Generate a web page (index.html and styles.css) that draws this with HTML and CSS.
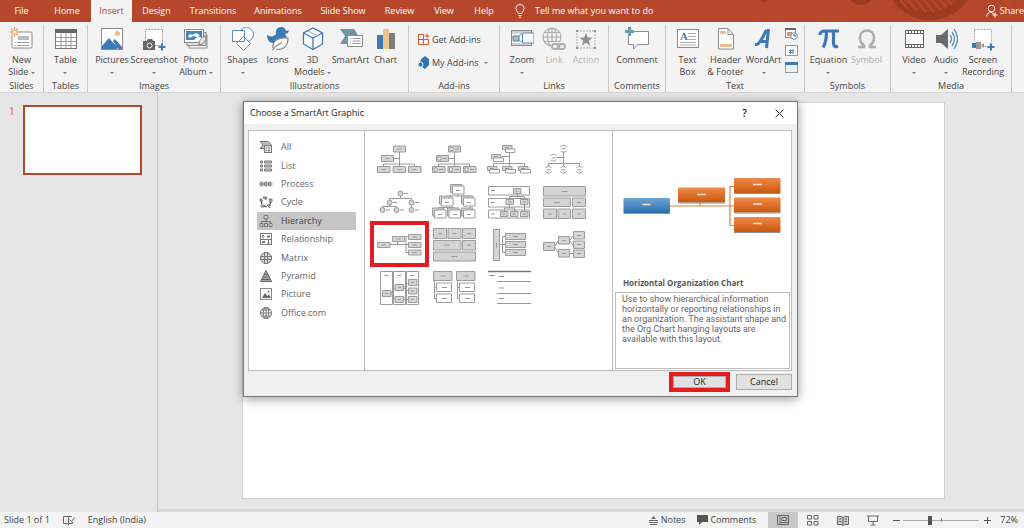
FILE: index.html
```html
<!DOCTYPE html>
<html lang="en">
<head>
  <meta charset="UTF-8">
  <title>Choose a SmartArt Graphic</title>
  <link rel="stylesheet" href="styles.css">
</head>
<body>

  <!-- Tabs -->
  <header class="tabs">
    <svg class="tabs-art" width="280" height="22" viewBox="0 0 280 22">
      <g fill="#9c3a22">
        <ellipse cx="20" cy="-3" rx="7" ry="5"/>
        <circle cx="117" cy="-8" r="13"/>
        <circle cx="186" cy="-26" r="46"/>
      </g>
      <circle cx="186" cy="-26" r="38" fill="#a43d24"/>
      <path d="M156 0l8 9M164 0l9 11M172 0l10 12M180 0l10 12M188 0l9 10M196 0l7 8M204 0l4 5" stroke="#b7472a" stroke-width="2"/>
      <path d="M244 0l12 14M256 0l10 11M268 0l7 8" stroke="#a94027" stroke-width="1"/>
    </svg>
    <nav class="tab-list">
      <button class="tab">File</button>
      <button class="tab">Home</button>
      <button class="tab active">Insert</button>
      <button class="tab">Design</button>
      <button class="tab">Transitions</button>
      <button class="tab">Animations</button>
      <button class="tab">Slide Show</button>
      <button class="tab">Review</button>
      <button class="tab">View</button>
      <button class="tab">Help</button>
    </nav>
    <button class="tell-me">
      <svg width="10" height="14" viewBox="0 0 10 14" fill="none" stroke="#fff"><path d="M3.2 9.5C3 7.5 1 7 1 4.6a4 4 0 0 1 8 0C9 7 7 7.500 6.800 9.500ZM3.500 11.500h3M4 13.200h2"/></svg>
      Tell me what you want to do
    </button>
    <button class="share">
      <svg width="12" height="14" viewBox="0 0 12 14" fill="none" stroke="#fff"><circle cx="5.500" cy="4.500" r="3.300"/><path d="M.6 12.500C1 9.500 3 8 5 8l3 2M9 8.500v5M6.500 11h5"/></svg>
      Share
    </button>
  </header>

  <!-- Ribbon -->
  <section class="ribbon">
    <div class="group">
      <div class="tools">
        <button class="tool">
          <svg width="24" height="24" viewBox="0 0 24 24" fill="none"><rect x="3" y="5" width="20" height="16" rx="1" fill="#fff" stroke="#8c8c8c"/><path d="M9 9h11v4H9z" fill="#bbb"/><path d="M8 15.500h12M8 18.500h12M5.500 15.500h1M5.500 18.500h1" stroke="#999"/><circle cx="5.500" cy="5" r="4.500" fill="#f3f3f3"/><path d="M5.500 0v10M.5 5h10M2 1.500l7 7M9 1.500l-7 7" stroke="#e9a86a" stroke-width="1.300"/><circle cx="5.500" cy="5" r="1.600" fill="#fff"/></svg>
          <span>New<br>Slide <i class="caret"></i></span>
        </button>
      </div>
      <div class="group-name">Slides</div>
    </div>

    <div class="group">
      <div class="tools">
        <button class="tool">
          <svg width="24" height="24" viewBox="0 0 24 24"><rect x="1.500" y="2.500" width="21" height="19" fill="#fff" stroke="#777"/><path d="M1 2h22v4H1z" fill="#666"/><path d="M2 10.500h20M2 14.500h20M2 18.500h20M7 6v15M12 6v15M17 6v15" stroke="#999"/></svg>
          <span>Table<br><i class="caret"></i></span>
        </button>
      </div>
      <div class="group-name">Tables</div>
    </div>

    <div class="group">
      <div class="tools">
        <button class="tool large">
          <svg width="24" height="24" viewBox="0 0 24 24"><rect x="1.500" y="1.500" width="21" height="21" fill="#fff" stroke="#8c8c8c"/><circle cx="17.500" cy="6.500" r="2.500" fill="#f0bd85"/><path d="M2 19l7-8 8 9v2H2zM13 14l2-2 7 8v2h-4z" fill="#3d7ab5"/></svg>
          <span>Pictures<br><i class="caret"></i></span>
        </button>
        <button class="tool large">
          <svg width="24" height="24" viewBox="0 0 24 24" fill="none"><rect x="3.500" y="2.500" width="17" height="16" fill="#fff" stroke="#999" stroke-dasharray="2 1"/><path d="M2 14h2.500l1.500-2h4l1.500 2H13v9H1v-9z" fill="#666"/><circle cx="7.500" cy="18.500" r="2.500" fill="#666" stroke="#eee"/><path d="M20 16.500v7M16.500 20h7" stroke="#3d7ab5" stroke-width="2"/></svg>
          <span>Screenshot<br><i class="caret"></i></span>
        </button>
        <button class="tool large">
          <svg width="24" height="24" viewBox="0 0 24 24"><rect x="5" y="8" width="18" height="13" fill="#fff" stroke="#8c8c8c"/><rect x="3" y="5.500" width="19" height="13" fill="#ddd" stroke="#8c8c8c"/><rect x=".5" y="2.500" width="19" height="13" fill="#fff" stroke="#8c8c8c"/><path d="M2 4h16v7l-4-2-4 4H2z" fill="#4a86ba"/><path d="M4 9c2-4 4 0 6-2s4 0 6 1l-3 2-4-1-3 2z" fill="#fff"/><path d="M15 17c0-3 2-6 6-8l1 3c-1 3-3 5-7 6z" fill="#e8e8e8" stroke="#777"/></svg>
          <span>Photo<br>Album <i class="caret"></i></span>
        </button>
      </div>
      <div class="group-name">Images</div>
    </div>

    <div class="group">
      <div class="tools lead">
        <button class="tool medium">
          <svg width="24" height="24" viewBox="0 0 24 24" fill="#fff" stroke="#5b92be"><circle cx="15.500" cy="7.500" r="7"/><path d="M1.500 3.500h12v11h-12zM12.500 9.500l7 7-7 7-7-7z"/></svg>
          <span>Shapes<br><i class="caret"></i></span>
        </button>
        <button class="tool small">
          <svg width="24" height="24" viewBox="0 0 24 24"><path d="M1 8c3 2 7 2 9-1-1-3 1-7 5-7 3 0 5 2 5 4l3-1-1 3-3 1c3 3 2 8-2 9H7C3 16 1 12 1 8z" fill="#3d7ab5"/><path d="M7 21c-1-7 5-11 15-10 0 7-4 13-12 11M6 23.500c3-4 6-6 10-8" fill="#fff" stroke="#858585" stroke-width="1.200"/></svg>
          <span>Icons</span>
        </button>
        <button class="tool medium">
          <svg width="24" height="24" viewBox="0 0 24 24" fill="#fff" stroke="#3d7ab5" stroke-width="1.300"><path d="M12 1l9.500 5v11L12 22.500 2.500 17V6z"/><path d="M2.500 6l9.500 5 9.500-5M12 11v11.500" fill="none"/><path d="M7 4l9.500 5" stroke="#9bbdd8"/></svg>
          <span>3D<br>Models <i class="caret"></i></span>
        </button>
        <button class="tool medium">
          <svg width="24" height="24" viewBox="0 0 24 24"><path d="M1 2h14l4 6-5 9H1l5-8z" fill="#7096a6"/><rect x="8.500" y="8.500" width="15" height="11" fill="#fff" stroke="#8c8c8c"/><path d="M11 11.500h1M11 14h1M11 16.500h1M13.500 11.500h8M13.500 14h8M13.500 16.500h8" stroke="#999"/></svg>
          <span>SmartArt</span>
        </button>
        <button class="tool small">
          <svg width="24" height="24" viewBox="0 0 24 24"><path d="M3 8h6v14H3z" fill="#3d7ab5"/><path d="M9 2h6v20H9z" fill="#edc38f"/><path d="M15 6h6v16h-6z" fill="#7d7d7d"/></svg>
          <span>Chart</span>
        </button>
      </div>
      <div class="group-name">Illustrations</div>
    </div>

    <div class="group">
      <div class="tools addins">
        <button class="row-tool">
          <svg width="13" height="13" viewBox="0 0 13 13" fill="none" stroke="#cf5b38"><path d="M6.500 1.500h-5v10h10v-5M1.500 6.500h10M6.500 1.500v10M10 .5v5M7.500 3h5"/></svg>
          Get Add-ins
        </button>
        <button class="row-tool">
          <svg width="13" height="13" viewBox="0 0 13 13"><path d="M4 3l4-3 4 3v6l-4 4-3-2 1-3-3-2z" fill="#2e75b6"/><circle cx="3.500" cy="8.500" r="2.500" fill="#2e75b6" stroke="#f3f3f3"/></svg>
          My Add-ins <i class="caret spaced"></i>
        </button>
      </div>
      <div class="group-name">Add-ins</div>
    </div>

    <div class="group">
      <div class="tools">
        <button class="tool small">
          <svg width="24" height="24" viewBox="0 0 24 24"><rect x="1.500" y="3.500" width="20" height="15" fill="#fff" stroke="#8c8c8c"/><path d="M2 4h19v3H2zM2 16h19v2H2z" fill="#d4d4d4"/><path d="M3 9h6v5H3z" fill="#9cc3d6" stroke="#777"/><path d="M9 9l4-3h11v10H13l-4-3z" fill="#f5faff" stroke="#5b92be"/><path d="M12.500 6.500v9" stroke="#5b92be"/></svg>
          <span>Zoom<br><i class="caret"></i></span>
        </button>
        <button class="tool small" disabled>
          <svg width="24" height="24" viewBox="0 0 24 24" fill="none" stroke="#adadad" stroke-width="1.200"><circle cx="10" cy="10" r="9"/><ellipse cx="10" cy="10" rx="4.500" ry="9"/><path d="M10 1v18M1 10h18M2.500 5.500h15M2.500 14.500h15"/><rect x="9" y="15" width="14" height="8" fill="#f3f3f3" stroke="none"/><g stroke-width="1.800"><rect x="10" y="17" width="7.500" height="5" rx="2.500"/><rect x="15.500" y="17" width="7.500" height="5" rx="2.500"/></g></svg>
          <span>Link</span>
        </button>
        <button class="tool small" disabled>
          <svg width="24" height="24" viewBox="0 0 24 24" fill="#8f8f8f"><rect x="3" y="4" width="18" height="17" fill="none" stroke="#aaa" stroke-dasharray="2 1"/><path d="M12 6l1.800 4.500 4.700.2-3.700 3 1.300 4.800L12 15.800l-4.100 2.700 1.300-4.800-3.700-3 4.700-.2z"/><path d="M2 3h2v2H2zM20 3h2v2h-2zM2 20h2v2H2zM20 20h2v2h-2z"/></svg>
          <span>Action</span>
        </button>
      </div>
      <div class="group-name">Links</div>
    </div>

    <div class="group">
      <div class="tools">
        <button class="tool">
          <svg width="24" height="24" viewBox="0 0 24 24"><path d="M3.500 4.500h20v13h-11l-4 4.500v-4.500h-5z" fill="#fff" stroke="#8c8c8c"/><path d="M4.500 0v9M0 4.500h9" stroke="#f3f3f3" stroke-width="5"/><path d="M4.500 0v9M0 4.500h9" stroke="#6f9bb0" stroke-width="3"/></svg>
          <span>Comment</span>
        </button>
      </div>
      <div class="group-name">Comments</div>
    </div>

    <div class="group">
      <div class="tools lead">
        <button class="tool medium">
          <svg width="24" height="24" viewBox="0 0 24 24"><rect x="1.500" y="2.500" width="21" height="18" fill="#fff" stroke="#8c8c8c"/><path d="M12 6.500h8M12 9.500h8M12 12.500h8M4 15.500h16M4 18h16" stroke="#aaa"/><text x="4" y="12.500" class="glyph-a">A</text></svg>
          <span>Text<br>Box</span>
        </button>
        <button class="tool medium">
          <svg width="24" height="24" viewBox="0 0 24 24"><path d="M4.500 1.500H14l5.500 6v14.500h-15z" fill="#fff" stroke="#8c8c8c"/><path d="M14 1.500v6h5.500" fill="none" stroke="#8c8c8c"/><path d="M6 4h6v3H6zM6 17h12v3H6z" fill="#efc08d"/></svg>
          <span>Header<br>&amp; Footer</span>
        </button>
        <button class="tool medium">
          <svg width="24" height="24" viewBox="0 0 24 24"><path d="M3 17.500c3 .5 5-2 7-6l4.500-8.500M16.500 2l-2 19M8 14.500h7" fill="none" stroke="#3d7ab5" stroke-width="3"/></svg>
          <span>WordArt<br><i class="caret"></i></span>
        </button>
        <div class="stack">
          <button aria-label="Date and time"><svg width="13" height="13" viewBox="0 0 13 13"><rect x=".5" y="1.500" width="10" height="9" fill="#fff" stroke="#888"/><path d="M0 1h11v2H0z" fill="#666"/><path d="M2 5h5v4H2z" fill="#e2926c"/><circle cx="9" cy="9" r="3.300" fill="#fff" stroke="#5b92be"/><path d="M9 7v2h2" fill="none" stroke="#555"/></svg></button>
          <button aria-label="Slide number"><svg width="13" height="13" viewBox="0 0 13 13"><rect x=".5" y="1.500" width="12" height="10" fill="#fff" stroke="#999"/><path d="M5.500 5v5M8 5v5M4 6.500h5M4 8.500h5" stroke="#5b92be"/></svg></button>
          <button aria-label="Object"><svg width="13" height="13" viewBox="0 0 13 13"><rect x=".5" y="1.500" width="12" height="10" fill="#eaf2f8" stroke="#999"/><path d="M0 1h13v3H0z" fill="#3d7ab5"/></svg></button>
        </div>
      </div>
      <div class="group-name">Text</div>
    </div>

    <div class="group">
      <div class="tools">
        <button class="tool medium">
          <svg width="24" height="24" viewBox="0 0 24 24"><path d="M3 8C3 4.500 5 4 8 4h14M9.500 4c0 8-1 13-3.500 16.500M16.500 4v12c0 3.500 2 4.500 4.500 3" fill="none" stroke="#3d7ab5" stroke-width="3.200"/></svg>
          <span>Equation<br><i class="caret"></i></span>
        </button>
        <button class="tool medium" disabled>
          <svg width="24" height="24" viewBox="0 0 24 24"><path d="M3 20h6v-1.500C6.500 16.500 5 14 5 11c0-5 3-7.500 7-7.500s7 2.500 7 7.500c0 3-1.500 5.500-4 7.500V20h6" fill="none" stroke="#adadad" stroke-width="2.600"/></svg>
          <span>Symbol</span>
        </button>
      </div>
      <div class="group-name">Symbols</div>
    </div>

    <div class="group">
      <div class="tools">
        <button class="tool small">
          <svg width="24" height="24" viewBox="0 0 24 24"><path d="M3 3h19v18H3z" fill="#666"/><path d="M4 7h17v10H4z" fill="#fff"/><path d="M4 5h17M4 19h17" stroke="#fff" stroke-width="2" stroke-dasharray="2 1"/></svg>
          <span>Video<br><i class="caret"></i></span>
        </button>
        <button class="tool small">
          <svg width="24" height="24" viewBox="0 0 24 24"><path d="M2 8h5l7-6v20l-7-6H2z" fill="#6a6a6a"/><path d="M16 8q3 4 0 8M18 5q5 7 0 14M20 2q7 10 0 20" fill="none" stroke="#5b92be" stroke-width="1.300"/></svg>
          <span>Audio<br><i class="caret"></i></span>
        </button>
        <button class="tool large">
          <svg width="24" height="24" viewBox="0 0 24 24"><rect x="3.500" y="2.500" width="17" height="17" fill="#fff" stroke="#aaa" stroke-dasharray="2 1"/><path d="M1 14h9v8H1z" fill="#f3f3f3"/><path d="M1 16h8v5H1z" fill="#3d7ab5"/><path d="M5 15h5v7H5zM10 18l3-2v5z" fill="#999"/><path d="M20 16v8M16 20h8" stroke="#f3f3f3" stroke-width="4"/><path d="M20 16.500v7M16.500 20h7" stroke="#3d7ab5" stroke-width="2"/></svg>
          <span>Screen<br>Recording</span>
        </button>
      </div>
      <div class="group-name">Media</div>
    </div>
  </section>

  <!-- Workspace -->
  <main class="workspace">
    <aside class="slides-pane">
      <span class="slide-number">1</span>
      <div class="slide-thumb"></div>
    </aside>
    <div class="editor">
      <div class="slide"></div>
    </div>
  </main>

  <!-- Dialog -->
  <div class="dialog" role="dialog" aria-labelledby="dialog-title">
    <div class="dialog-bar">
      <span id="dialog-title">Choose a SmartArt Graphic</span>
      <button class="bar-button" aria-label="Help">?</button>
      <button class="bar-button" aria-label="Close"><svg width="9" height="9" viewBox="0 0 9 9" stroke="#333"><path d="M.5.5l8 8M8.500.5l-8 8"/></svg></button>
    </div>

    <div class="panes">
      <div class="categories">
        <button class="category"><svg width="14" height="14" viewBox="0 0 14 14"><path d="M1 1.500h8l3 3-3 4H1l3-3.500z" fill="#bbb" stroke="#777"/><rect x="5.500" y="5.500" width="7" height="7" fill="#ddd" stroke="#777"/><path d="M7 8h1M9 8h2M7 10.500h1M9 10.500h2" stroke="#777"/></svg>All</button>
        <button class="category"><svg width="14" height="14" viewBox="0 0 14 14" fill="#ccc" stroke="#777"><path d="M1.500 2h2v2h-2zM5.500 2h7v2h-7zM1.500 6h2v2h-2zM5.500 6h7v2h-7zM1.500 10h2v2h-2zM5.500 10h7v2h-7z"/></svg>List</button>
        <button class="category"><svg width="14" height="14" viewBox="0 0 14 14" fill="#ccc" stroke="#777"><rect x="1.500" y="5" width="2.500" height="4" rx="1"/><rect x="5.500" y="5" width="2.500" height="4" rx="1"/><rect x="9.500" y="5" width="2.500" height="4" rx="1"/><path d="M0 7h14" stroke-width=".6"/></svg>Process</button>
        <button class="category"><svg width="14" height="14" viewBox="0 0 14 14" fill="none" stroke="#666"><circle cx="7" cy="7" r="4.500" stroke-width="1.600" stroke-dasharray="4 2"/><path d="M4 2h3v3zM11 4h2v3h-2zM8 10h3v3zM2 10h3v2H2zM1 4h2v2H1z" fill="#ccc" stroke-width=".8"/></svg>Cycle</button>
        <button class="category selected"><svg width="14" height="14" viewBox="0 0 14 14" fill="#ccc" stroke="#777"><path d="M7 5v5M2.500 10V7.500h9V10" fill="none"/><path d="M5 1.500h4v3.500H5zM1 9.500h3v3H1zM5.500 9.500h3v3h-3zM10 9.500h3v3h-3z"/></svg>Hierarchy</button>
        <button class="category"><svg width="14" height="14" viewBox="0 0 14 14" fill="none" stroke="#777"><rect x="1.500" y="1.500" width="11" height="11"/><path d="M4 7V3M2.500 4.500L4 3l1.500 1.500M2 7.500h10M9.500 8v4M8 10.500l1.500 1.500 1.500-1.500"/><path d="M3 10h3M8 4.500h3" stroke-width="2"/></svg>Relationship</button>
        <button class="category"><svg width="14" height="14" viewBox="0 0 14 14" fill="none" stroke="#777"><circle cx="7" cy="7" r="5.500" fill="#ddd"/><path d="M5.500 1v12M8.500 1v12M1 5.500h12M1 8.500h12"/></svg>Matrix</button>
        <button class="category"><svg width="14" height="14" viewBox="0 0 14 14" fill="#aaa" stroke="#666"><path d="M7 1.500l5.500 11h-11z"/><path d="M5 5.500h4M3.500 8h7M2.500 10.500h9"/></svg>Pyramid</button>
        <button class="category"><svg width="14" height="14" viewBox="0 0 14 14"><rect x="1.500" y="1.500" width="11" height="11" fill="#fff" stroke="#888"/><path d="M3 11l3-5 2.500 3L10 7.500l2 3.500z" fill="#666"/><circle cx="9.500" cy="4.500" r="1" fill="#777"/></svg>Picture</button>
        <button class="category"><svg width="14" height="14" viewBox="0 0 14 14" fill="none" stroke="#777"><circle cx="7" cy="7" r="5.500"/><ellipse cx="7" cy="7" rx="2.800" ry="5.500"/><path d="M7 1.500v11M1.500 7h11M2.500 4h9M2.500 10h9"/></svg>Office.com</button>
      </div>

      <div class="layouts">
        <button class="layout" aria-label="Organization Chart"><svg width="49" height="38" viewBox="0 0 49 38">
          <path class="wire" d="M24.500 11v14M18.500 17.500h6M8.500 25v-2h31v2"/>
          <path class="box" d="M18.500 5h12v6h-12zM6.500 14.500h12v6h-12zM2.500 25.500h12.500v6H2.500zM18 25.500h12.500v6H18zM33.500 25.500H46v6H33.500z"/>
          <path class="dash" d="M22.500 8h4M10.500 17.500h4M6.500 28.500h4M22.500 28.500h4M37.500 28.500h4"/>
        </svg></button>
        <button class="layout" aria-label="Picture Organization Chart"><svg width="49" height="38" viewBox="0 0 49 38">
          <path class="wire" d="M24.500 11v14M18.500 17.500h6M8.500 25v-2h31v2"/>
          <path class="box" d="M18.500 5h12v6h-12zM6.500 14.500h12v6h-12zM2.500 25.500h12.500v6H2.500zM18 25.500h12.500v6H18zM33.500 25.500H46v6H33.500z"/>
          <path class="paper" d="M20 6.500h3v3h-3zM8 16h3v3H8zM4 27h3v3H4zM19.500 27h3v3h-3zM35 27h3v3h-3z"/>
          <path class="dash" d="M25 8h4M13 17.500h4M9 28.500h4M25 28.500h4M40 28.500h4"/>
        </svg></button>
        <button class="layout" aria-label="Name and Title Organization Chart"><svg width="49" height="38" viewBox="0 0 49 38">
          <path class="wire" d="M24.500 11v14M15.500 15.500h9M8.500 25v-2.500h31V25"/>
          <path class="box" d="M17.500 4.500h9.500v4h-9.500zM6.500 13.500h9v4h-9zM2.500 25.500H12v4H2.500zM17.500 25.500H27v4h-9.500zM33.500 25.500H43v4h-9.500z"/>
          <path class="paper" d="M20.500 8h9.500v3.500h-9.500zM8.500 17h10v3.500h-10zM4.500 28.500h10V32h-10zM20.500 28.500h10V32h-10zM35.500 28.500h10V32h-10z"/>
          <path class="dash" d="M20 6.500h4M9 15.500h4M5 27.500h4M20 27.500h4M36 27.500h4"/>
        </svg></button>
        <button class="layout" aria-label="Half Circle Organization Chart"><svg width="49" height="38" viewBox="0 0 49 38">
          <path class="wire" d="M23.500 11v14M16.500 16.500h7M8.500 25v-2.500h31V25"/>
          <path class="arc" d="M20.500 6a3.500 3.500 0 0 1 6 0M20.500 9.500a3.500 3.500 0 0 0 6 0M10.500 15a3.500 3.500 0 0 1 6 0M10.500 18.500a3.500 3.500 0 0 0 6 0M5.500 27a3.500 3.500 0 0 1 6 0M5.500 30.500a3.500 3.500 0 0 0 6 0M20.500 27a3.500 3.500 0 0 1 6 0M20.500 30.500a3.500 3.500 0 0 0 6 0M36.500 27a3.500 3.500 0 0 1 6 0M36.500 30.500a3.500 3.500 0 0 0 6 0"/>
          <path class="dash" d="M21.500 7.800h4M11.500 16.800h4M6.500 28.800h4M21.500 28.800h4M37.500 28.800h4"/>
        </svg></button>

        <button class="layout" aria-label="Circle Picture Hierarchy"><svg width="49" height="38" viewBox="0 0 49 38">
          <path class="wire" d="M25.500 12v3.500M14.500 18v-2.500h22V27M7.500 25v-1.500h14V25M14.500 20v3.500"/>
          <g class="box"><circle cx="25.500" cy="10.500" r="2.500"/><circle cx="14.500" cy="19.500" r="2.500"/><circle cx="36.500" cy="19.500" r="2.500"/><circle cx="7.500" cy="27" r="2.500"/><circle cx="21.500" cy="27" r="2.500"/><circle cx="36.500" cy="27" r="2.500"/></g>
          <path class="dash" d="M29 10.500h4M18 19.500h4M40 19.500h4M11 27h4M25 27h4M40 27h4"/>
        </svg></button>
        <button class="layout" aria-label="Hierarchy"><svg width="49" height="38" viewBox="0 0 49 38">
          <path class="wire" d="M28 11v2.500M16.500 15v-2h24v14M8.500 26v-1.500h16V26M16.500 22v3"/>
          <path class="box" d="M20.500 1.500H32v8H20.500zM9.500 13H21v8H9.500zM31.500 13H43v8H31.500zM2.500 25H14v8H2.500zM17.500 25H29v8H17.500zM31.500 25H43v8H31.500z"/>
          <path class="paper" d="M22.500 3H34v8H22.500zM11.500 15H23v8H11.500zM33.500 15H45v8H33.500zM4.500 27H16v8H4.500zM19 27h11.500v8H19zM33.500 27H45v8H33.500z"/>
          <path class="dash" d="M26 7.500h4M15 19.500h4M37 19.500h4M8 31.500h4M23 31.500h4M37 31.500h4"/>
        </svg></button>
        <button class="layout" aria-label="Labeled Hierarchy"><svg width="49" height="38" viewBox="0 0 49 38">
          <path class="paper" d="M3.500 3.500h41v8.500h-41zM3.500 15.500h41V24h-41zM3.500 27h41v8h-41z"/>
          <path class="wire" d="M32.500 10v3.500M24.500 16v-2.500h15V29M19.500 28v-3h10v3M24.500 21v4"/>
          <path class="box" d="M28.500 5.500h7.500v5h-7.500zM21 16.500h7.500v5H21zM35.500 16.500H43v5h-7.500zM15.500 28.500H23v5h-7.500zM25.500 28.500H33v5h-7.500zM35.500 28.500H43v5h-7.500z"/>
          <path class="dash" d="M6 7.500h4M6 19.500h4M6 31h4M30.500 8h3M23.500 19h3M38 19h3M17.500 31h3M27.500 31h3M38 31h3"/>
        </svg></button>
        <button class="layout" aria-label="Table Hierarchy"><svg width="49" height="38" viewBox="0 0 49 38">
          <path class="box" d="M3.500 3.500h42V13h-42zM3.500 15h27v8.500h-27zM32.500 15h13v8.500h-13zM3.500 26h13v9.500h-13zM18 26h12.500v9.500H18zM32.500 26h13v9.500h-13z"/>
          <path class="dash" d="M21.500 8.500h6M14 19.500h6M37 19.500h4M8 31h4M22.500 31h4M37 31h4"/>
        </svg></button>

        <button class="layout chosen" aria-label="Horizontal Organization Chart"><svg width="49" height="38" viewBox="0 0 49 38">
          <path class="wire" d="M15 19.500h18M22.500 16v3.500M33 11.500h-2v16h2"/>
          <path class="box" d="M17.500 11.500h12v5h-12zM2.500 17.500H15v5H2.500zM33.500 9.500H46v5H33.500zM33.500 17.500H46v5H33.500zM33.500 25H46v5H33.500z"/>
          <path class="dash" d="M21.500 14h4M6.500 20h4M37.500 12h4M37.500 20h4M37.500 27.500h4"/>
        </svg></button>
        <button class="layout" aria-label="Architecture Layout"><svg width="49" height="38" viewBox="0 0 49 38">
          <path class="box" d="M3.500 3.500h13v10h-13zM18 3.500h13v10H18zM32.500 3.500h13v10h-13zM3.500 15.500H31V25H3.500zM32.500 15.500h13V25h-13zM3.500 27h42v9h-42z"/>
          <path class="dash" d="M8 8.500h4M22.500 8.500h4M37 8.500h4M14 20h6M37 20h4M21.500 31.500h6"/>
        </svg></button>
        <button class="layout" aria-label="Horizontal Multi-Level Hierarchy"><svg width="49" height="38" viewBox="0 0 49 38">
          <path class="wire" d="M14.500 19.500h6M20 11.500h-2.500v16H20"/>
          <path class="box" d="M8.500 4.500h6v31h-6zM20.500 8.500h20v6h-20zM20.500 16.500h20v6h-20zM20.500 24.500h20v6h-20z"/>
          <path class="dash" d="M28 11.500h5M28 19.500h5M28 27.500h5M11.500 17.500v5"/>
        </svg></button>
        <button class="layout" aria-label="Horizontal Hierarchy"><svg width="49" height="38" viewBox="0 0 49 38">
          <path class="wire" d="M14.500 21.500l4-6M14.500 21.500l4 7M29.500 15.500l4-5M29.500 15.500l4 5M29.500 28.500h4"/>
          <path class="box" d="M3.500 17.500h11v8h-11zM18.500 11.500h11v7.500h-11zM18.500 24.500h11V32h-11zM33.500 6.500h11V14h-11zM33.500 16h11v7.500h-11zM33.500 25h11v7.500h-11z"/>
          <path class="dash" d="M7 21.500h4M22 15.500h4M22 28.500h4M37 10.500h4M37 19.500h4M37 28.500h4"/>
        </svg></button>

        <button class="layout" aria-label="Horizontal Labeled Hierarchy"><svg width="49" height="38" viewBox="0 0 49 38">
          <path class="paper" d="M5.500 4.500h12v33h-12zM18.500 4.500h12v33h-12zM31.500 4.500h12v33h-12z"/>
          <path class="wire" d="M16 26.500l4-6M16 26.500l4 6M28.500 20.500l5-5M28.500 20.500l5 4M28.500 32.500h5"/>
          <path class="box" d="M7.500 23.500H16v6H7.500zM20 17.500h8.500v6H20zM20 29.500h8.500v6H20zM33.500 12.500H42v6h-8.500zM33.500 21H42v6h-8.500zM33.500 29.500H42v6h-8.500z"/>
          <path class="dash" d="M9.500 8.500h4M22.500 8.500h4M35.500 8.500h4M10 26.500h3M23 20.500h3M23 32.500h3M36 15.500h3M36 24h3M36 32.500h3"/>
        </svg></button>
        <button class="layout" aria-label="Hierarchy List"><svg width="49" height="38" viewBox="0 0 49 38">
          <path class="wire" d="M4.500 13v18.500h2M27.500 13v18.500h2M4.500 20.500h2M27.500 20.500h2"/>
          <path class="box" d="M3.500 4.500H22v9H3.500zM26.500 4.500H45v9H26.500z"/>
          <path class="paper" d="M6.500 16h15v8.500h-15zM6.500 27h15v8.500h-15zM29.500 16h15v8.500h-15zM29.500 27h15v8.500h-15z"/>
          <path class="dash" d="M10.500 9h5M33.500 9h5M12 20.500h5M35 20.500h5M12 31.500h5M35 31.500h5"/>
        </svg></button>
        <button class="layout" aria-label="Lined List"><svg width="49" height="38" viewBox="0 0 49 38">
          <path d="M3 4.500h43" stroke="#777" stroke-width="1.500"/>
          <path d="M12 14.500h34M12 26.500h34M12 36.500h34" stroke="#999"/>
          <path class="dash" d="M4 8.500h6M14 9.500h5M14 21h5M14 31.500h5"/>
        </svg></button>
      </div>

      <div class="preview">
        <svg class="preview-art" width="160" height="60" viewBox="0 0 160 60">
          <defs>
            <linearGradient id="orange" x2="0" y2="1"><stop offset="0" stop-color="#ee8b4c"/><stop offset=".5" stop-color="#df7029"/><stop offset="1" stop-color="#c55a11"/></linearGradient>
            <linearGradient id="blue" x2="0" y2="1"><stop offset="0" stop-color="#6ca3d4"/><stop offset=".6" stop-color="#4686bf"/><stop offset="1" stop-color="#2a6ca8"/></linearGradient>
          </defs>
          <path d="M48 30h64M78 26v4M112 10.500h-4v39h4" fill="none" stroke="#d9824e" stroke-width="1.200"/>
          <rect x="1.500" y="22" width="46.500" height="15" rx="1" fill="url(#blue)"/>
          <g fill="url(#orange)">
            <rect x="56" y="11.500" width="47" height="15" rx="1"/>
            <rect x="112" y="2" width="46.500" height="15" rx="1"/>
            <rect x="112" y="21.500" width="46.500" height="15" rx="1"/>
            <rect x="112" y="41" width="46.500" height="15" rx="1"/>
          </g>
          <path d="M1.500 37.500H48M56 27h47M112 17.500h46.500M112 37h46.500M112 56.500h46.500" stroke="#777" stroke-width=".8"/>
          <path d="M20.500 28.500h8M75 18.500h9M131 8.500h9M131 28h9M131 47.500h9" stroke="#f7dfd0" stroke-width="1.300"/>
        </svg>
        <h2>Horizontal Organization Chart</h2>
        <p>Use to show hierarchical information horizontally or reporting relationships in an organization. The assistant shape and the Org Chart hanging layouts are available with this layout.</p>
      </div>
    </div>

    <div class="dialog-buttons">
      <span class="ring"><button class="push">OK</button></span>
      <button class="push">Cancel</button>
    </div>
  </div>

  <!-- Status bar -->
  <footer class="status">
    <span>Slide 1 of 1</span>
    <svg width="12" height="11" viewBox="0 0 12 11" fill="none" stroke="#666"><path d="M5.500 1.500h-5v7h5v2M5.500 1.500v7M5.500 1.500H9M5.500 8.500h4V7M6.500 4.500l2 2 3-4"/></svg>
    <span>English (India)</span>
    <div class="status-right">
      <button class="notes"><svg width="9" height="9" viewBox="0 0 9 9" fill="#666"><path d="M4.500 0l2.500 3H2zM0 4h9v1H0zM0 6h9v1H0zM1 8h7v1H1z"/></svg>Notes</button>
      <button class="comments"><svg width="11" height="10" viewBox="0 0 11 10" fill="#555"><path d="M0 0h11v7H5l-3 3V7H0z"/></svg>Comments</button>
      <button class="view on" aria-label="Normal"><svg width="12" height="11" viewBox="0 0 12 11" fill="none" stroke="#666"><path d="M.5.5h11v9H.5zM3 .5v9M3 7.500h8.500M5 2.500h4.500v3H5z"/></svg></button>
      <button class="view" aria-label="Slide Sorter"><svg width="12" height="11" viewBox="0 0 12 11" fill="none" stroke="#666"><path d="M.5.500h4v3.500h-4zM7 .5h4v3.500H7zM.5 6.500h4V10h-4zM7 6.500h4V10H7z"/></svg></button>
      <button class="view" aria-label="Reading View"><svg width="12" height="11" viewBox="0 0 12 11" fill="#ccc" stroke="#666"><path d="M.5 1.500h4l1.500 1 1.500-1h4v8h-4L6 10.500l-1.500-1h-4zM6 2.500v8M2 4h2.500M2 6.500h2.500M7.500 4H10M7.500 6.500H10"/></svg></button>
      <button class="view" aria-label="Slide Show"><svg width="12" height="11" viewBox="0 0 12 11" fill="none" stroke="#666"><path d="M0 1h12M1.500 1v5.500h9V1M6 6.500V10M3.500 10h5"/></svg></button>
      <button class="step" aria-label="Zoom out"><svg width="7" height="7" viewBox="0 0 7 7" stroke="#555"><path d="M0 3.500h7"/></svg></button>
      <input class="zoom" type="range" min="0" max="100" value="35" aria-label="Zoom">
      <button class="step" aria-label="Zoom in"><svg width="7" height="7" viewBox="0 0 7 7" stroke="#555"><path d="M0 3.500h7M3.500 0v7"/></svg></button>
      <span class="percent">72%</span>
    </div>
  </footer>

</body>
</html>
```

FILE: styles.css
```css
* {
  box-sizing: border-box;
}

body {
  margin: 0;
  min-height: 100vh;
  display: flex;
  flex-direction: column;
  font-family: "Open Sans", "Noto Sans", sans-serif;
  font-size: 9px;
  line-height: 12px;
  color: #444;
  background: #e6e6e6;
  overflow: hidden;
}

button {
  margin: 0;
  padding: 0;
  border: none;
  background: none;
  font: inherit;
  color: inherit;
  white-space: nowrap;
}

svg {
  display: block;
  flex: none;
}

/* Tabs */
.tabs {
  position: relative;
  display: flex;
  height: 22px;
  background: #b7472a;
  color: #fff;
}

.tabs-art {
  position: absolute;
  top: 0;
  right: 0;
}

.tab-list {
  display: grid;
  grid-template-columns: 43px 48px 41px 49px 64px 66px 64px 49px 40px 40px;
}

.tab.active {
  background: #f3f3f3;
  color: #b7472a;
}

.tell-me,
.share {
  display: flex;
  align-items: center;
  gap: 10px;
  margin-left: 11px;
}

.share {
  position: relative;
  gap: 2px;
  margin-left: auto;
}

/* Ribbon */
.ribbon {
  display: grid;
  grid-template-columns: 44px 44px 133px 188px 91px 109px 57px 139px 86px 121px;
  height: 71px;
  padding-top: 3px;
  background: #f3f3f3;
  border-bottom: 1px solid #d6d6d6;
}

.group {
  display: flex;
  flex-direction: column;
  height: 67px;
  border-right: 1px solid #c8c8c8;
}

.tools {
  flex: 1;
  display: flex;
  justify-content: center;
}

.tools.lead {
  padding-right: 4px;
}

.tool {
  display: flex;
  flex-direction: column;
  align-items: center;
  gap: 3px;
  padding-top: 2px;
}

.tool.small {
  width: 32px;
}

.tool.medium {
  width: 38px;
}

.tool.large {
  width: 42px;
}

.tool:disabled {
  color: #b1b1b1;
}

.caret {
  display: inline-block;
  border: 2px solid transparent;
  border-top-color: #777;
  border-bottom: none;
  vertical-align: middle;
}

.caret.spaced {
  margin-left: 3px;
}

.group-name {
  text-align: center;
}

.addins {
  flex-direction: column;
  justify-content: flex-start;
  gap: 10px;
  padding: 8px 0 0 8px;
}

.row-tool {
  display: flex;
  align-items: center;
  gap: 2px;
}

.stack {
  display: flex;
  flex-direction: column;
  gap: 4px;
  padding: 2px 0 0 2px;
}

.glyph-a {
  font-family: "Liberation Serif", serif;
  font-size: 11px;
  font-weight: bold;
  fill: #3d7ab5;
}

/* Workspace */
.workspace {
  flex: 1;
  display: flex;
}

.slides-pane {
  width: 158px;
  display: flex;
  align-items: flex-start;
  gap: 8px;
  padding: 12px 15px 0 9px;
  border-right: 1px solid #c6c6c6;
}

.slide-number {
  color: #d0502f;
  font-size: 10px;
}

.slide-thumb {
  flex: 1;
  height: 70px;
  background: #fff;
  border: 2px solid #b7472a;
}

.editor {
  flex: 1;
  display: flex;
  padding: 9px 79px 10px 84px;
  border-bottom: 3px solid #d9d9d9;
}

.slide {
  flex: 1;
  background: #fff;
  border: 1px solid #d2d2d2;
}

/* Dialog */
.dialog {
  position: absolute;
  top: 101px;
  left: 243px;
  width: 555px;
  padding-bottom: 4px;
  background: #f0f0f0;
  border: 1px solid #777;
  box-shadow: 0 2px 10px rgba(0, 0, 0, 0.4);
}

.dialog-bar {
  display: flex;
  align-items: center;
  height: 22px;
  padding-left: 6px;
  background: #fff;
  color: #222;
}

.dialog-bar span {
  flex: 1;
}

.bar-button {
  width: 35px;
  display: flex;
  justify-content: center;
  font-size: 10px;
  font-weight: 600;
}

.panes {
  display: grid;
  grid-template-columns: 115px 249px 1fr;
  height: 241px;
  margin: 6px 5px 0 4px;
  background: #fff;
  border: 1px solid #bdbdbd;
}

.categories {
  display: grid;
  grid-template-rows: repeat(10, 1fr);
  height: 184px;
  padding: 0 8px;
  margin-top: 7px;
  color: #666;
}

.category {
  display: flex;
  align-items: center;
  gap: 8px;
  padding-left: 2px;
}

.category.selected {
  background: #c6c6c6;
  color: #444;
}

.layouts {
  display: grid;
  grid-template-columns: repeat(4, 55px);
  grid-auto-rows: 42px;
  padding: 8px 0 0 7px;
  border-left: 1px solid #bdbdbd;
  border-right: 1px solid #bdbdbd;
}

.layout {
  display: flex;
  align-items: center;
  justify-content: center;
}

.layout.chosen {
  outline: 4px solid #e31b23;
  outline-offset: -2px;
}

.layout .box {
  fill: #d4d4d4;
  stroke: #9c9c9c;
}

.layout .paper {
  fill: #fff;
  stroke: #9c9c9c;
}

.layout .wire,
.layout .arc,
.layout .dash {
  fill: none;
  stroke: #999;
}

.preview {
  display: flex;
  flex-direction: column;
  padding: 45px 1px 1px 2px;
}

.preview-art {
  margin-left: 7px;
}

.preview h2 {
  margin: auto 0 3px 8px;
  font-size: 8px;
  line-height: 12px;
  color: #555;
}

.preview p {
  height: 77px;
  margin: 0;
  padding: 1px 2px 1px 6px;
  border: 1px solid #bdbdbd;
  font-family: Roboto, "Open Sans", sans-serif;
  line-height: 10px;
  color: #666;
}

.dialog-buttons {
  display: flex;
  justify-content: flex-end;
  align-items: center;
  gap: 6px;
  margin: 1px 5px 0;
}

.push {
  width: 56px;
  height: 16px;
  background: #e1e1e1;
  border: 1px solid #adadad;
  color: #222;
  line-height: 12px;
}

.ring {
  display: flex;
  border: 4px solid #e31b23;
}

.ring .push {
  width: 53px;
  height: 12px;
  line-height: 10px;
}

/* Status bar */
.status {
  display: flex;
  align-items: center;
  gap: 13px;
  height: 16px;
  padding: 0 6px 0 4px;
  background: #f3f3f3;
}

.status-right {
  display: flex;
  align-items: center;
  margin-left: auto;
}

.notes,
.comments {
  display: flex;
  align-items: center;
  gap: 3px;
  margin-right: 12px;
}

.comments {
  gap: 2px;
}

.view {
  display: flex;
  align-items: center;
  justify-content: center;
  width: 30px;
  height: 16px;
}

.view.on {
  background: #c8c8c8;
}

.step {
  margin: 0 3px 0 5px;
}

.zoom {
  appearance: none;
  width: 76px;
  height: 9px;
  margin: 0;
  background:
    linear-gradient(#999, #999) 38px center / 1px 4px no-repeat,
    linear-gradient(#aaa, #aaa) 0 center / 100% 1px no-repeat;
}

.zoom::-webkit-slider-thumb {
  appearance: none;
  width: 4px;
  height: 9px;
  background: #555;
}

.percent {
  margin-left: 6px;
}
```
